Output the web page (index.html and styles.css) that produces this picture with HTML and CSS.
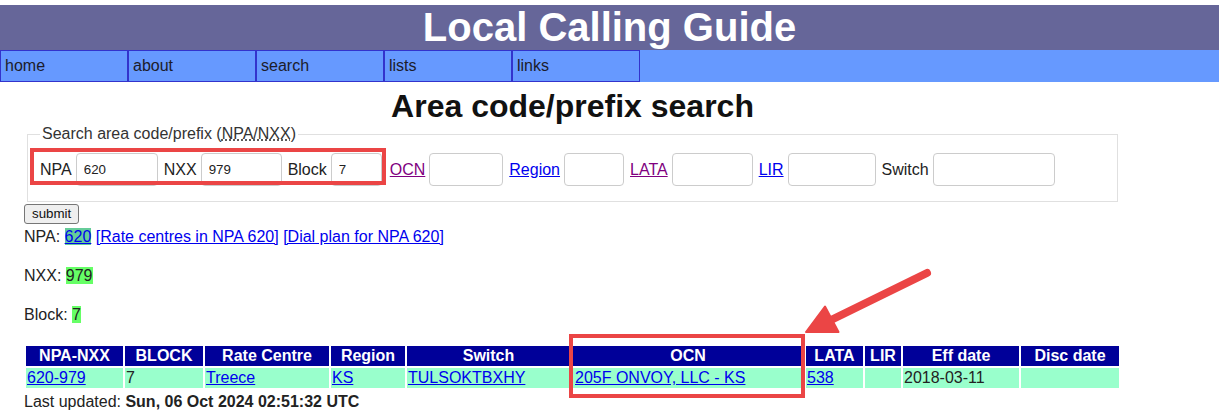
FILE: index.html
```html
<!DOCTYPE html>
<html lang="en">
<head>
<meta charset="utf-8">
<title>Local Calling Guide - Area code/prefix search</title>
<link rel="stylesheet" href="styles.css">
</head>
<body>
<div class="page">
  <header class="banner">
    <div class="site-title">Local Calling Guide</div>
  </header>
  <nav class="menu">
    <a class="menu-item" href="#">home</a>
    <a class="menu-item" href="#">about</a>
    <a class="menu-item" href="#">search</a>
    <a class="menu-item" href="#">lists</a>
    <a class="menu-item" href="#">links</a>
  </nav>
  <main class="content">
    <h1 class="page-title">Area code/prefix search</h1>
    <form class="search-form">
      <fieldset class="search">
        <legend class="search-legend">Search area code/prefix (<abbr class="abbr" title="Numbering Plan Area / Central office code">NPA/NXX</abbr>)</legend>
        <div class="fields">
          <span class="lbl">NPA</span><input class="fld fld-npa" type="text" value="620">
          <span class="lbl">NXX</span><input class="fld fld-nxx" type="text" value="979">
          <span class="lbl">Block</span><input class="fld fld-block" type="text" value="7">
          <a class="lbl link visited lbl-ocn" href="#">OCN</a><input class="fld fld-ocn" type="text">
          <a class="lbl link" href="#">Region</a><input class="fld fld-region" type="text">
          <a class="lbl link visited" href="#">LATA</a><input class="fld fld-lata" type="text">
          <a class="lbl link" href="#">LIR</a><input class="fld fld-lir" type="text">
          <span class="lbl">Switch</span><input class="fld fld-switch" type="text">
        </div>
      </fieldset>
      <button class="submit" type="button">submit</button>
    </form>
    <div class="info info-first">NPA: <a class="link hl-npa" href="#">620</a> <a class="link" href="#">[Rate centres in NPA 620]</a> <a class="link" href="#">[Dial plan for NPA 620]</a></div>
    <div class="info">NXX: <span class="hl">979</span></div>
    <div class="info">Block: <span class="hl">7</span></div>
    <table class="results">
      <colgroup>
        <col class="c-npanxx"><col class="c-block"><col class="c-rate"><col class="c-region"><col class="c-switch"><col class="c-ocn"><col class="c-lata"><col class="c-lir"><col class="c-eff"><col class="c-disc">
      </colgroup>
      <thead>
        <tr><th>NPA-NXX</th><th>BLOCK</th><th>Rate Centre</th><th>Region</th><th>Switch</th><th>OCN</th><th>LATA</th><th>LIR</th><th>Eff date</th><th>Disc date</th></tr>
      </thead>
      <tbody>
        <tr><td><a class="link" href="#">620-979</a></td><td>7</td><td><a class="link" href="#">Treece</a></td><td><a class="link" href="#">KS</a></td><td><a class="link" href="#">TULSOKTBXHY</a></td><td class="td-ocn"><a class="link" href="#">205F ONVOY, LLC - KS</a></td><td><a class="link" href="#">538</a></td><td></td><td>2018-03-11</td><td></td></tr>
      </tbody>
    </table>
    <div class="updated">Last updated: <b>Sun, 06 Oct 2024 02:51:32 UTC</b></div>
  </main>

  <div class="mark mark-inputs"></div>
  <div class="mark mark-ocn"></div>
  <svg class="arrow" width="1219" height="419" viewBox="0 0 1219 419" aria-hidden="true">
    <line x1="927" y1="273" x2="829" y2="321" stroke="#eb4545" stroke-width="8" stroke-linecap="round"/>
    <polygon points="806,332 825,306.5 838.5,332" fill="#eb4545" stroke="#eb4545" stroke-width="2" stroke-linejoin="round"/>
  </svg>
</div>
</body>
</html>
```

FILE: styles.css
```css
* { box-sizing: border-box; }

html, body {
  margin: 0;
  padding: 0;
  background: #ffffff;
}

body {
  font-family: "Liberation Sans", Arial, sans-serif;
  font-size: 16px;
  color: #222222;
}

.page {
  position: relative;
  width: 1219px;
  height: 419px;
  overflow: hidden;
  padding-top: 5px;
}

/* Banner */
.banner {
  background: #666699;
  height: 45px;
}

.site-title {
  color: #ffffff;
  font-weight: bold;
  font-size: 40px;
  line-height: 45px;
  text-align: center;
}

/* Menu */
.menu {
  display: flex;
  background: #6699ff;
  height: 32px;
}

.menu-item {
  width: 128px;
  height: 32px;
  border: 1px solid #3333cc;
  padding-left: 4px;
  line-height: 30px;
  color: #1c1c2a;
  text-decoration: none;
}

/* Content */
.content {
  margin-left: 24px;
  width: 1097px;
}

.page-title {
  margin: 6px 0 0 0;
  font-size: 32px;
  font-weight: bold;
  text-align: center;
  color: #111111;
  line-height: normal;
}

.search-form {
  margin: 0;
}

.search {
  margin: 0 3px;
  padding: 5px 12px 10px 12px;
  border: 1px solid #e0e0e0;
}

.search-legend {
  padding: 0 2px;
  color: #333333;
}

.abbr {
  text-decoration: underline dotted;
}

.fields {
  display: flex;
  align-items: center;
  height: 43px;
}

.lbl {
  margin-right: 4px;
  white-space: nowrap;
}

.fld {
  height: 33px;
  margin-right: 6px;
  border: 1px solid #cccccc;
  border-radius: 4px;
  background: #ffffff;
  padding: 0 7px;
  font-family: "Liberation Sans", Arial, sans-serif;
  font-size: 13.33px;
  color: #222222;
}

.fld-npa { width: 82px; }
.fld-nxx { width: 81px; }
.fld-block { width: 51px; margin-right: 8px; }
.fld-ocn { width: 74px; }
.fld-region { width: 60px; }
.fld-lata { width: 81px; }
.fld-lir { width: 88px; }
.fld-switch { width: 122px; }

.link {
  color: #0000ee;
  text-decoration: underline;
}

.visited {
  color: #800080;
}

.submit {
  display: block;
  height: 20px;
  margin: 2px 0 0 0;
  padding: 0 7px;
  font-family: "Liberation Sans", Arial, sans-serif;
  font-size: 13.33px;
  line-height: 18px;
  color: #111111;
  background: #efefef;
  border: 1px solid #767676;
  border-radius: 3px;
}

.info {
  margin-top: 21px;
  line-height: normal;
}

.info-first {
  margin-top: 4px;
}

.hl-npa {
  background: #66cc99;
}

.hl {
  background: #66ff66;
}

/* Results table */
.results {
  margin-top: 20px;
  width: 1097px;
  table-layout: fixed;
  border-collapse: separate;
  border-spacing: 2px;
}

.results th,
.results td {
  height: 20px;
  padding: 1px;
  line-height: 18px;
  white-space: nowrap;
}

.results th {
  background: #000099;
  color: #ffffff;
  font-weight: bold;
  text-align: center;
}

.results td {
  background: #99ffcc;
  text-align: left;
}

.results .td-ocn {
  padding-left: 3px;
}

.c-npanxx { width: 97px; }
.c-block { width: 78px; }
.c-rate { width: 124px; }
.c-region { width: 74px; }
.c-switch { width: 163px; }
.c-ocn { width: 232px; }
.c-lata { width: 57px; }
.c-lir { width: 36px; }
.c-eff { width: 116px; }
.c-disc { width: 98px; }

.updated {
  margin-top: 3px;
  line-height: normal;
}

/* Annotations over the screenshot */
.mark {
  position: absolute;
  border: 4px solid #eb4545;
  pointer-events: none;
}

.mark-inputs {
  left: 30px;
  top: 148px;
  width: 356px;
  height: 37px;
}

.mark-ocn {
  left: 569px;
  top: 334px;
  width: 236px;
  height: 64px;
}

.arrow {
  position: absolute;
  left: 0;
  top: 0;
  pointer-events: none;
}
```
